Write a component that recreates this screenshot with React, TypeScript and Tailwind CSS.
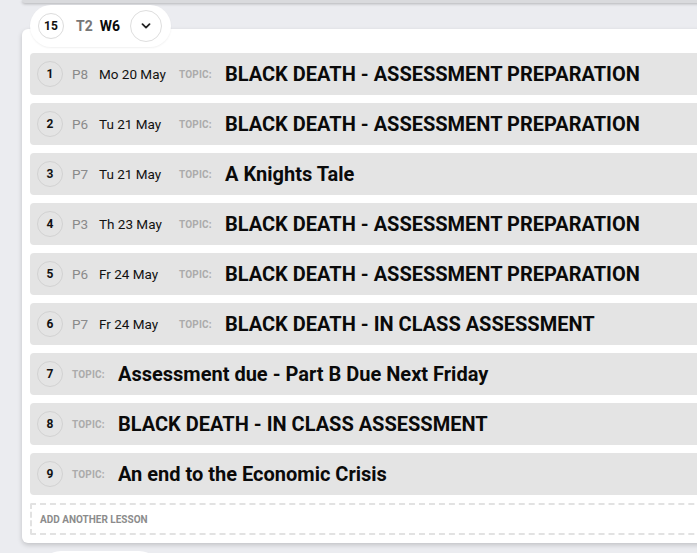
import React from "react";

type Lesson = {
  n: number;
  period?: string;
  date?: string;
  topic: string;
};

const lessons: Lesson[] = [
  { n: 1, period: "P8", date: "Mo 20 May", topic: "BLACK DEATH - ASSESSMENT PREPARATION" },
  { n: 2, period: "P6", date: "Tu 21 May", topic: "BLACK DEATH - ASSESSMENT PREPARATION" },
  { n: 3, period: "P7", date: "Tu 21 May", topic: "A Knights Tale" },
  { n: 4, period: "P3", date: "Th 23 May", topic: "BLACK DEATH - ASSESSMENT PREPARATION" },
  { n: 5, period: "P6", date: "Fr 24 May", topic: "BLACK DEATH - ASSESSMENT PREPARATION" },
  { n: 6, period: "P7", date: "Fr 24 May", topic: "BLACK DEATH - IN CLASS ASSESSMENT" },
  { n: 7, topic: "Assessment due - Part B Due Next Friday" },
  { n: 8, topic: "BLACK DEATH - IN CLASS ASSESSMENT" },
  { n: 9, topic: "An end to the Economic Crisis" },
];

const LessonRow = ({ lesson }: { lesson: Lesson }) => {
  return (
    <div className="h-[42px] rounded bg-[#e4e4e4] flex items-center pl-[7px]">
      <div className="w-[26px] h-[26px] rounded-full border border-[#d2d2d2] flex items-center justify-center text-[12px] font-bold text-[#111]">
        {lesson.n}
      </div>
      <div className="ml-[9px] flex items-center">
        {lesson.period && (
          <span className="w-[27px] text-[13.5px] text-[#8a8a8a]">{lesson.period}</span>
        )}
        {lesson.date && (
          <span className="w-[80px] text-[13.5px] text-[#111]">{lesson.date}</span>
        )}
        <span className="w-[46px] text-[10px] font-bold text-[#ababab] tracking-[0.2px]">
          TOPIC:
        </span>
        <span className="text-[20px] font-bold text-[#0a0a0a] whitespace-nowrap">
          {lesson.topic}
        </span>
      </div>
    </div>
  );
};

const App = () => {
  return (
    <div
      className="w-screen h-screen overflow-hidden bg-[#ebecf0]"
      style={{ fontFamily: "Roboto, 'Liberation Sans', sans-serif" }}
    >
      {/* bottom edge of previous week */}
      <div className="h-[3px] ml-[22px] w-[800px] bg-[#d9dadd] shadow-[0_1px_3px_rgba(0,0,0,0.25)] rounded-b" />

      <div className="pt-[2px]">
        <div className="relative z-10 ml-[30px] inline-flex items-center h-[42px] rounded-full bg-white pl-[8px] pr-[9px] shadow-[0_1px_2px_rgba(0,0,0,0.06)]">
          <div className="w-[26px] h-[26px] rounded-full border border-[#dcdcdc] flex items-center justify-center text-[12px] font-bold text-[#111]">
            15
          </div>
          <span className="ml-[12px] text-[14px] font-bold text-[#777]">T2</span>
          <span className="ml-[7px] text-[14px] font-bold text-[#0a0a0a]">W6</span>
          <div className="ml-[10px] w-[32px] h-[32px] rounded-full border border-[#dedede] flex items-center justify-center">
            <svg width="10" height="6" viewBox="0 0 10 6" fill="none">
              <path d="M1.5 1.2 L5 4.6 L8.5 1.2" stroke="#222" strokeWidth="1.8" strokeLinecap="round" strokeLinejoin="round" />
            </svg>
          </div>
        </div>

        <div className="-mt-[18px] ml-[22px] w-[800px] bg-white rounded-md shadow-[0_2px_5px_rgba(0,0,0,0.18)] pt-[24px] px-[8px] pb-[8px] flex flex-col gap-[8px]">
          {lessons.map((l) => (
            <LessonRow key={l.n} lesson={l} />
          ))}
          <div className="h-[32px] border-2 border-dashed border-[#e2e2e2] rounded-[2px] flex items-center pl-[8px]">
            <span className="text-[10px] font-bold text-[#8c8c8c]">ADD ANOTHER LESSON</span>
          </div>
        </div>

        {/* next week pill, peeking */}
        <div className="mt-[8px] ml-[40px] w-[120px] h-[42px] rounded-full bg-white" />
      </div>
    </div>
  );
};

export default App;
